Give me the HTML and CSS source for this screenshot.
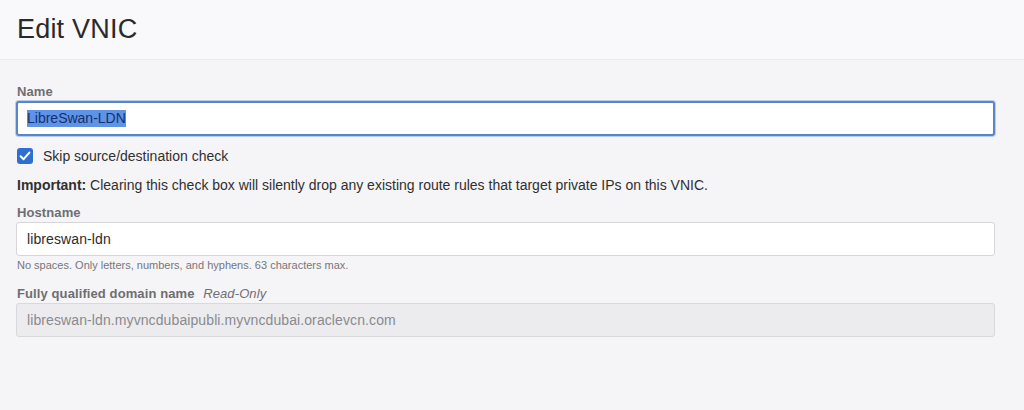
FILE: index.html
```html
<!DOCTYPE html>
<html>
<head>
<meta charset="utf-8">
<link rel="stylesheet" href="styles.css">
</head>
<body>
<div class="page">
  <header class="header"><h1 class="title">Edit VNIC</h1></header>
  <main class="body">
    <div class="field">
      <label class="label">Name</label>
      <div class="input input-focus"><span class="sel">LibreSwan-LDN</span></div>
    </div>
    <div class="check-row">
      <span class="checkbox"><svg viewBox="0 0 16 16" width="16" height="16"><path d="M3.6 8.2 L6.6 11.2 L12.4 4.6" fill="none" stroke="#fff" stroke-width="2" stroke-linecap="round" stroke-linejoin="round"/></svg></span>
      <span class="check-text">Skip source/destination check</span>
    </div>
    <p class="important"><b>Important:</b> Clearing this check box will silently drop any existing route rules that target private IPs on this VNIC.</p>
    <div class="field">
      <label class="label">Hostname</label>
      <div class="input">libreswan-ldn</div>
      <div class="hint">No spaces. Only letters, numbers, and hyphens. 63 characters max.</div>
    </div>
    <div class="field field-fqdn">
      <label class="label">Fully qualified domain name <i class="ro">Read-Only</i></label>
      <div class="input input-ro">libreswan-ldn.myvncdubaipubli.myvncdubai.oraclevcn.com</div>
    </div>
  </main>
</div>
</body>
</html>
```

FILE: styles.css
```css
html, body {
  margin: 0;
  padding: 0;
}
body {
  width: 1024px;
  height: 410px;
  overflow: hidden;
  background: #f5f4f7;
  font-family: "Liberation Sans", Arial, sans-serif;
  color: #333;
}
.page {
  display: flex;
  flex-direction: column;
}
.header {
  height: 59px;
  background: #f9f8fa;
  border-bottom: 1px solid #ebeaed;
  display: flex;
  align-items: center;
  padding-left: 17px;
}
.title {
  margin: 0;
  font-size: 27px;
  font-weight: normal;
  color: #2a2a2a;
  letter-spacing: 0.2px;
}
.body {
  padding: 24px 29px 0 16px;
  display: flex;
  flex-direction: column;
}
.field {
  display: flex;
  flex-direction: column;
}
.label {
  font-size: 13px;
  font-weight: bold;
  color: #6e6e72;
  padding-left: 1px;
  line-height: 16px;
  margin-bottom: 1px;
  letter-spacing: 0.1px;
}
.ro {
  font-weight: normal;
  margin-left: 5px;
  color: #707074;
}
.input {
  box-sizing: border-box;
  border: 1px solid #d6d5d9;
  border-radius: 3px;
  background: #fff;
  font-size: 14px;
  color: #2c2c2c;
  display: flex;
  align-items: center;
  padding-left: 10px;
  height: 34px;
  letter-spacing: 0.1px;
}
.input-focus {
  border: 2px solid #5a86c8;
  box-shadow: 0 0 0 1px #b8ccec;
  padding-left: 9px;
  height: 35px;
  letter-spacing: 0;
}
.sel {
  background: #5f93e6;
  color: #14306e;
  line-height: 17px;
}
.check-row {
  display: flex;
  align-items: center;
  margin-top: 11px;
  padding-left: 1px;
  height: 17px;
}
.checkbox {
  width: 16px;
  height: 16px;
  border-radius: 3px;
  background: #2f6fd4;
  display: flex;
  align-items: center;
  justify-content: center;
}
.check-text {
  font-size: 14px;
  margin-left: 10px;
  color: #303030;
}
.important {
  margin: 13px 0 0 1px;
  font-size: 14px;
  color: #303030;
  line-height: 16px;
}
.important + .field {
  margin-top: 12px;
}
.hint {
  font-size: 11px;
  color: #77777b;
  margin-top: 3px;
  padding-left: 1px;
  line-height: 13px;
}
.field-fqdn {
  margin-top: 14px;
}
.input-ro {
  background: #ececee;
  color: #8a8a8e;
  border-color: #d9d8dc;
}
```
